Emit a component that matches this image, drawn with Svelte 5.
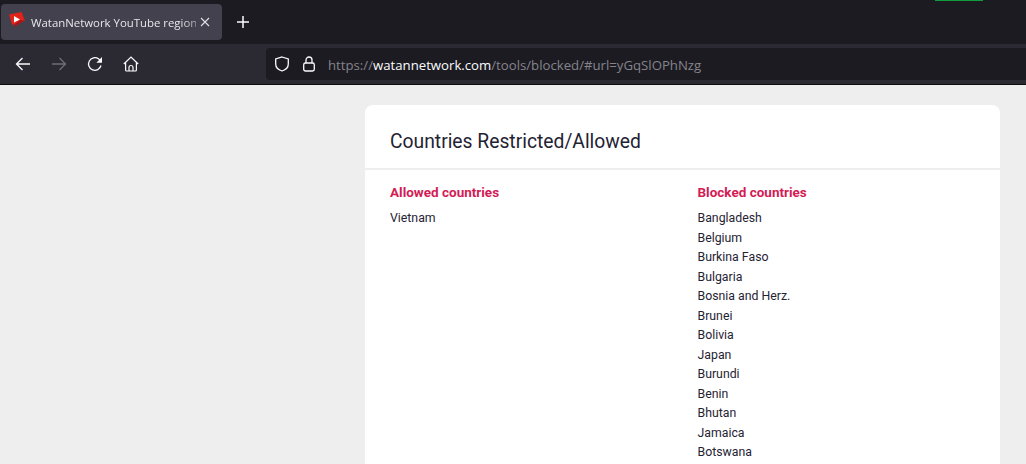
<script lang="ts">
const blocked = [
  "Bangladesh",
  "Belgium",
  "Burkina Faso",
  "Bulgaria",
  "Bosnia and Herz.",
  "Brunei",
  "Bolivia",
  "Japan",
  "Burundi",
  "Benin",
  "Bhutan",
  "Jamaica",
  "Botswana",
];
</script>

<div class="window">
  <header class="tabbar">
    <div class="tab">
      <svg class="favicon" width="16" height="16" viewBox="0 0 16 16" aria-hidden="true">
        <path d="M0 2.500 L12.500 0 L15.800 8.500 L8 13 L6.500 15.500 L5.500 12.500 L3 12.500 Z" fill="#e2231a" />
        <path d="M11 8 L15.800 8.500 L8 13 L6.500 15.500 L5.500 12.500 Z" fill="#a8151c" />
        <path d="M5 4 L11 7.500 L5 10.500 Z" fill="#fff" />
      </svg>
      <span class="tab-title">WatanNetwork YouTube region</span>
      <svg class="tab-close" width="10" height="10" viewBox="0 0 10 10" aria-hidden="true">
        <path d="M1 1l8 8M9 1l-8 8" stroke="currentColor" stroke-width="1.100" fill="none" />
      </svg>
    </div>
    <svg class="new-tab" width="14" height="14" viewBox="0 0 14 14" aria-hidden="true">
      <path d="M7 1v12M1 7h12" stroke="currentColor" stroke-width="1.500" fill="none" />
    </svg>
    <span class="indicator"></span>
  </header>

  <nav class="toolbar">
    <div class="nav-buttons">
      <svg width="16" height="16" viewBox="0 0 16 16" aria-hidden="true">
        <path d="M15 8H1.500M7.500 2L1.500 8l6 6" stroke="currentColor" stroke-width="1.300" fill="none" />
      </svg>
      <svg class="disabled" width="16" height="16" viewBox="0 0 16 16" aria-hidden="true">
        <path d="M1 8h13.500M8.500 2l6 6-6 6" stroke="currentColor" stroke-width="1.300" fill="none" />
      </svg>
      <svg width="16" height="16" viewBox="0 0 16 16" aria-hidden="true">
        <path d="M14 9.500A6.300 6.300 0 1 1 11.500 2.800L14.200 5.400" stroke="currentColor" stroke-width="1.300" fill="none" />
        <path d="M15 1v5.800H9.400Z" fill="currentColor" />
      </svg>
      <svg width="16" height="16" viewBox="0 0 16 16" aria-hidden="true">
        <path d="M0.800 8l7.200-7 7.200 7M2.600 6.500V14a1 1 0 0 0 1 1h8.800a1 1 0 0 0 1-1V6.500M6 15v-3.500a2 2 0 0 1 4 0V15" stroke="currentColor" stroke-width="1.200" fill="none" />
      </svg>
    </div>
    <div class="urlbar">
      <svg width="16" height="16" viewBox="0 0 16 16" aria-hidden="true">
        <path d="M8 1l6.300 2v5c0 3.500-2.500 5.800-6.300 7-3.800-1.200-6.300-3.500-6.300-7V3Z" stroke="currentColor" stroke-width="1.300" fill="none" />
      </svg>
      <svg width="14" height="16" viewBox="0 0 14 16" aria-hidden="true">
        <path d="M4 7V4a3 3 0 0 1 6 0V7" stroke="currentColor" stroke-width="1.300" fill="none" />
        <rect x="1.700" y="7" width="10.600" height="8" rx="1.800" stroke="currentColor" stroke-width="1.300" fill="none" />
      </svg>
      <span class="url">https://<b>watannetwork.com</b>/tools/blocked/#url=yGqSlOPhNzg</span>
    </div>
  </nav>

  <main class="page">
    <section class="card">
      <h1>Countries Restricted/Allowed</h1>
      <div class="columns">
        <div>
          <h2>Allowed countries</h2>
          <ul><li>Vietnam</li></ul>
        </div>
        <div>
          <h2>Blocked countries</h2>
          <ul>
            {#each blocked as country}
              <li>{country}</li>
            {/each}
          </ul>
        </div>
      </div>
    </section>
  </main>
</div>

<style>
  :global(body) {
    overflow: hidden;
    background: #eeeeee;
  }

  .window {
    width: 1026px;
    height: 464px;
    overflow: hidden;
    display: flex;
    flex-direction: column;
    font-family: Roboto, sans-serif;
  }

  .tabbar {
    position: relative;
    height: 44px;
    flex: none;
    box-sizing: border-box;
    padding: 4px 0 4px 1px;
    display: flex;
    align-items: center;
    background: #1c1b22;
    color: #fbfbfe;
  }

  .tab {
    width: 221px;
    height: 36px;
    box-sizing: border-box;
    padding: 0 11px 0 8px;
    display: flex;
    align-items: center;
    border-radius: 4px;
    background: #42414d;
  }

  .favicon {
    flex: none;
    margin-bottom: 4px;
  }

  .tab-title {
    margin-left: 6px;
    width: 165px;
    flex: none;
    overflow: hidden;
    white-space: nowrap;
    font-family: "Open Sans", sans-serif;
    font-size: 11.400px;
    color: #e6e6ea;
    -webkit-mask-image: linear-gradient(to right, #000 90%, #0008);
    mask-image: linear-gradient(to right, #000 90%, #0008);
  }

  .tab-close {
    flex: none;
    margin-left: 4px;
    color: #e0e0e6;
  }

  .new-tab {
    margin-left: 14px;
  }

  .indicator {
    position: absolute;
    top: 0;
    left: 935px;
    width: 48px;
    height: 1px;
    background: #0f9d3e;
  }

  .toolbar {
    height: 41px;
    flex: none;
    box-sizing: border-box;
    padding: 4px 0 4px 15px;
    display: flex;
    align-items: center;
    background: #2b2a33;
    border-bottom: 1px solid #0c0c0d;
    color: #fbfbfe;
  }

  .nav-buttons {
    width: 251px;
    display: flex;
    align-items: center;
    gap: 20px;
  }

  .disabled {
    color: #6f6e75;
  }

  .urlbar {
    flex: 1;
    height: 32px;
    box-sizing: border-box;
    padding-left: 8px;
    display: flex;
    align-items: center;
    gap: 12px;
    background: #1c1b22;
    border-radius: 4px 0 0 4px;
  }

  .url {
    padding-top: 2px;
    font-family: "Open Sans", sans-serif;
    font-size: 13.200px;
    color: #85848c;
    white-space: nowrap;
  }

  .url b {
    font-weight: 400;
    color: #fbfbfe;
  }

  .page {
    flex: 1;
    min-height: 0;
    padding: 20px 26px 0 365px;
  }

  .card {
    background: #fff;
    border-radius: 8px 8px 0 0;
    color: #1f2333;
    height: 400px;
  }

  h1 {
    margin: 0;
    padding: 25px 25px 14px;
    font-size: 19.300px;
    line-height: 24px;
    font-weight: 400;
    border-bottom: 2px solid #eeeeee;
  }

  .columns {
    display: grid;
    grid-template-columns: 307.500px 1fr;
    padding: 13px 25px 0;
  }

  h2 {
    margin: 0 0 8px;
    font-size: 13.500px;
    line-height: 18px;
    font-weight: 700;
    color: #d31b55;
  }

  ul {
    margin: 0;
    padding: 0;
    list-style: none;
  }

  li {
    font-size: 12.300px;
    line-height: 19.500px;
  }
</style>
